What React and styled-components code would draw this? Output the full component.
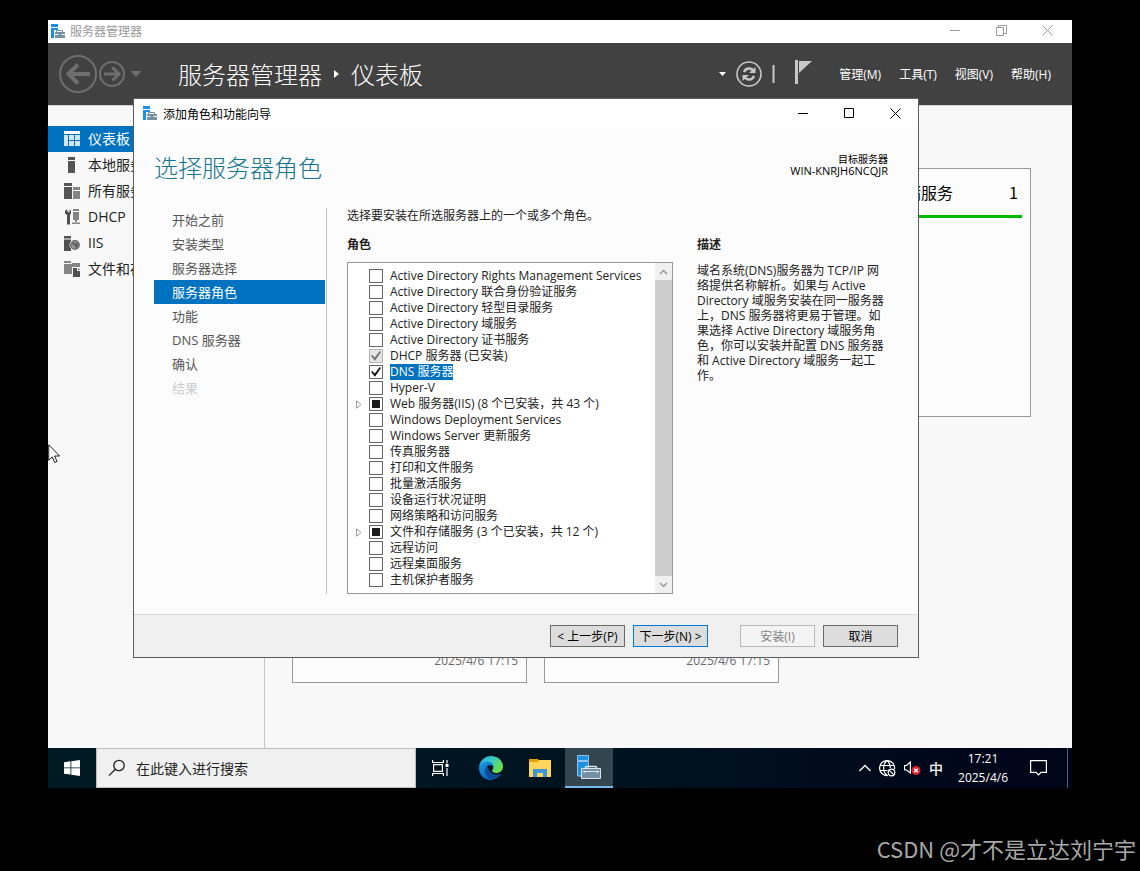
import React from "react";
import styled, { createGlobalStyle, css } from "styled-components";

const ui = `"Open Sans", "Noto Sans CJK SC", sans-serif`;
const cjk = `"Noto Sans CJK SC", sans-serif`;

const sideItems = [
  { name: "仪表板", icon: "dashboard", active: true },
  { name: "本地服务器", icon: "server" },
  { name: "所有服务器", icon: "servers" },
  { name: "DHCP", icon: "dhcp" },
  { name: "IIS", icon: "iis" },
  { name: "文件和存储服务", icon: "files" },
];

const tiles = [
  { id: "dhcp" },
  { id: "iis" },
  { id: "storage", name: "文件和存储服务", count: 1 },
  { id: "local", time: "2025/4/6 17:15" },
  { id: "all", time: "2025/4/6 17:15" },
];

const steps = [
  { name: "开始之前" },
  { name: "安装类型" },
  { name: "服务器选择" },
  { name: "服务器角色", current: true },
  { name: "功能" },
  { name: "DNS 服务器" },
  { name: "确认" },
  { name: "结果", disabled: true },
];

const roles = [
  { name: "Active Directory Rights Management Services" },
  { name: "Active Directory 联合身份验证服务" },
  { name: "Active Directory 轻型目录服务" },
  { name: "Active Directory 域服务" },
  { name: "Active Directory 证书服务" },
  { name: "DHCP 服务器 (已安装)", checked: true, disabled: true },
  { name: "DNS 服务器", checked: true, selected: true },
  { name: "Hyper-V" },
  { name: "Web 服务器(IIS) (8 个已安装，共 43 个)", partial: true },
  { name: "Windows Deployment Services" },
  { name: "Windows Server 更新服务" },
  { name: "传真服务器" },
  { name: "打印和文件服务" },
  { name: "批量激活服务" },
  { name: "设备运行状况证明" },
  { name: "网络策略和访问服务" },
  { name: "文件和存储服务 (3 个已安装，共 12 个)", partial: true },
  { name: "远程访问" },
  { name: "远程桌面服务" },
  { name: "主机保护者服务" },
];

const description = `域名系统(DNS)服务器为 TCP/IP 网
络提供名称解析。如果与 Active
Directory 域服务安装在同一服务器
上，DNS 服务器将更易于管理。如
果选择 Active Directory 域服务角
色，你可以安装并配置 DNS 服务器
和 Active Directory 域服务一起工
作。`;

const ManagerIcon = () => (
  <svg width="14" height="14" viewBox="0 0 14 14" aria-hidden="true">
    <path d="M0 0h7v3H0zM0 4h7v2H3v8H0z" fill="#1e8fe0" />
    <path d="M5.500 8V6.500h6V8" fill="none" stroke="#7490a4" />
    <path d="M4 8h10v6H4z" fill="#7490a4" />
    <path d="M4 10.500h3.500M10.500 10.500H14" stroke="#fff" />
  </svg>
);

const WindowButtons = ({ restore }) => (
  <Controls>
    <button aria-label="最小化">
      <svg width="11" height="11" viewBox="0 0 11 11">
        <path d="M0 5.5h10" />
      </svg>
    </button>
    <button aria-label={restore ? "还原" : "最大化"}>
      <svg width="11" height="11" viewBox="0 0 11 11">
        {restore ? (
          <path d="M.5 2.5h7v8h-7zM2.5 2.5v-2h8v8h-3" />
        ) : (
          <path d="M.5.5h9v9h-9z" />
        )}
      </svg>
    </button>
    <button aria-label="关闭">
      <svg width="11" height="11" viewBox="0 0 11 11">
        <path d="M.5.5l10 10M10.5.5l-10 10" />
      </svg>
    </button>
  </Controls>
);

const SideIcon = ({ name }) => (
  <svg width="16" height="16" viewBox="0 0 16 16" aria-hidden="true">
    {name === "dashboard" && (
      <>
        <path d="M0 0h16v3H0z" fill="#fff" />
        <path
          d="M0 4h4v11H0zM5 4h5v5H5zM11 4h5v5h-5zM5 10h5v5H5zM11 10h5v5h-5z"
          fill="#cfe6f7"
        />
      </>
    )}
    {name === "server" && (
      <path d="M4 0h7v3H4zM4 4h7v12H4z" fill="#555" />
    )}
    {name === "servers" && (
      <>
        <path d="M0 0h8v3H0zM0 4h8v12H0z" fill="#555" />
        <path d="M9 4h7v3H9zM9 8h7v8H9z" fill="#858585" />
      </>
    )}
    {name === "dhcp" && (
      <>
        <path
          d="M1 1.5v3L3 6v9.5h3V6l1-1.500V1.500L5.500.5V3h-2V.5z"
          fill="#505050"
        />
        <path d="M9 0h6v2H9zM9 3h6v8H9zM11 11h2v2h-2zM8 13.500h8V15H8z" fill="#858585" />
      </>
    )}
    {name === "iis" && (
      <>
        <path d="M0 1h7v2.500H0zM0 4.500h7V16H0z" fill="#505050" />
        <circle cx="11" cy="10" r="5.500" fill="#f7f7f7" />
        <circle cx="11" cy="10" r="4.300" fill="#999" stroke="#666" strokeWidth="1.200" />
        <path d="M8 8l2-1 1 2-1 2zM12 7l2 2-1 4-2-1z" fill="#555" />
      </>
    )}
    {name === "files" && (
      <>
        <path d="M0 0h7v2H0zM0 3h8v10H0zM8 2h8v5H8z" fill="#858585" />
        <path d="M8 6h8v10H8z" fill="#f7f7f7" />
        <path d="M9 7h4v3h3v6H9zM14 7l2 2h-2z" fill="#505050" />
      </>
    )}
  </svg>
);

const RoleRow = ({ role, id }) => {
  const box = React.useRef(null);
  React.useEffect(() => {
    box.current.indeterminate = !!role.partial;
  }, [role.partial]);
  return (
    <Row>
      {role.partial ? (
        <Expander aria-label="展开">
          <svg width="6" height="9" viewBox="0 0 6 9">
            <path d="M.5.8v7.400l4.500-3.700z" fill="#fff" stroke="#999" />
          </svg>
        </Expander>
      ) : (
        <span />
      )}
      <Check
        ref={box}
        id={id}
        type="checkbox"
        defaultChecked={role.checked}
        disabled={role.disabled}
      />
      <RoleName htmlFor={id} $selected={role.selected}>
        {role.name}
      </RoleName>
    </Row>
  );
};

const Wizard = () => (
  <Dialog role="dialog" aria-label="添加角色和功能向导">
    <DialogTitle>
      <ManagerIcon />
      <span>添加角色和功能向导</span>
      <WindowButtons />
    </DialogTitle>
    <DialogHead>
      <h1>选择服务器角色</h1>
      <Target>
        <div>目标服务器</div>
        <strong>WIN-KNRJH6NCQJR</strong>
      </Target>
    </DialogHead>
    <DialogBody>
      <Steps>
        {steps.map((s) => (
          <Step key={s.name} $current={s.current} disabled={s.disabled}>
            {s.name}
          </Step>
        ))}
      </Steps>
      <RolePane>
        <p>选择要安装在所选服务器上的一个或多个角色。</p>
        <Columns>
          <RoleColumn>
            <h2>角色</h2>
            <ListBox>
              <Rows>
                {roles.map((r, i) => (
                  <RoleRow key={r.name} role={r} id={`role-${i}`} />
                ))}
              </Rows>
              <ScrollBar>
                <button aria-label="向上">
                  <svg width="9" height="6" viewBox="0 0 9 6">
                    <path d="M1 5l3.500-3.500L8 5" />
                  </svg>
                </button>
                <div />
                <button aria-label="向下">
                  <svg width="9" height="6" viewBox="0 0 9 6">
                    <path d="M1 1l3.500 3.500L8 1" />
                  </svg>
                </button>
              </ScrollBar>
            </ListBox>
          </RoleColumn>
          <About>
            <h2>描述</h2>
            <div>{description}</div>
          </About>
        </Columns>
      </RolePane>
    </DialogBody>
    <DialogFoot>
      <PushButton>&lt; 上一步(P)</PushButton>
      <PushButton $primary>下一步(N) &gt;</PushButton>
      <Spacer />
      <PushButton disabled>安装(I)</PushButton>
      <PushButton>取消</PushButton>
    </DialogFoot>
  </Dialog>
);

const Taskbar = () => (
  <Bar>
    <TaskButton aria-label="开始">
      <svg width="16" height="16" viewBox="0 0 16 16" fill="#fff">
        <path d="M0 2.200L6.500 1.300v6.200H0zM7.300 1.200L16 0v7.500H7.300zM0 8.300h6.500v6.300L0 13.700zM7.300 8.300H16V16l-8.700-1.200z" />
      </svg>
    </TaskButton>
    <Search>
      <svg width="18" height="18" viewBox="0 0 18 18" fill="none" stroke="#222" strokeWidth="1.300">
        <circle cx="11" cy="6.500" r="5.200" />
        <path d="M7.300 10.300L1 16.600" />
      </svg>
      <input type="text" aria-label="搜索" placeholder="在此键入进行搜索" />
    </Search>
    <TaskButton aria-label="任务视图" $wide>
      <svg width="17" height="16" viewBox="0 0 17 16" fill="none" stroke="#fff" strokeWidth="1.200">
        <path d="M.6 0v2.500h10.800V0M.6 16v-2.500h10.800V16M1.600 4.600h8.800v6.800H1.600zM15 0v3.500M15 8v8" />
        <path d="M13.500 4h3v3h-3z" fill="#fff" stroke="none" />
      </svg>
    </TaskButton>
    <TaskButton aria-label="Edge">
      <svg width="24" height="24" viewBox="0 0 24 24">
        <defs>
          <linearGradient id="edgeTop" x1="0" y1="0" x2="1" y2="0.500">
            <stop offset="0" stopColor="#2aa7e8" />
            <stop offset="0.500" stopColor="#35c9c9" />
            <stop offset="1" stopColor="#6be04a" />
          </linearGradient>
          <linearGradient id="edgeBody" x1="0" y1="0" x2="0.600" y2="1">
            <stop offset="0" stopColor="#1b9de2" />
            <stop offset="1" stopColor="#0a62bd" />
          </linearGradient>
        </defs>
        <path d="M0 11C1 4.500 6 0 12 0c7 0 12 5 12 10.500 0 4-3 6.500-6.500 6.500-3 0-4.500-1.200-4.500-2.300 0-.8 1.300-1.200 1.300-3.200C14.300 9 12 7 8.500 7 4.500 7 1.500 9 0 11z" fill="url(#edgeTop)" />
        <path d="M0 12c.5-4.500 4-6.500 8.500-6.500 4 0 6.500 3 6 6-.4-1.700-2-2.500-3.500-2.500-3 0-4.500 3-4.500 6 0 4.500 3.500 8 8 8.700-1 .3-1.700.3-2.500.3C5 24 0 18.500 0 12z" fill="url(#edgeBody)" />
        <path d="M9 10c-2 1.500-2.500 3.500-2.500 5.500 0 4.500 4 8.300 8.500 8.100 3.500-1.100 6-3.500 7.400-6.100-1.500.8-3.400 1.200-5.400 1-4.500-.5-8-3.500-8-8.500z" fill="#0c4c94" />
      </svg>
    </TaskButton>
    <TaskButton aria-label="文件资源管理器">
      <svg width="22" height="18" viewBox="0 0 22 18">
        <path d="M0 0h9l1.500 2H0z" fill="#d99a00" />
        <path d="M0 2h9l1-1h12v17H0z" fill="#ffd45c" />
        <path d="M0 0h9v2l-1 1H0z" fill="#e8a200" />
        <path d="M4 10h14v8h-4v-4H8v4H4z" fill="#3b97dc" />
      </svg>
    </TaskButton>
    <TaskButton aria-label="服务器管理器" $active>
      <svg width="24" height="24" viewBox="0 0 24 24">
        <path d="M.5.500h11v5H.5zM.5 6.500h11V21H.5z" fill="#1e8fe0" stroke="#8cc4ee" />
        <path d="M8 13.500l1-2h10l1 2" fill="none" stroke="#dbe5ec" strokeWidth="1.500" />
        <path d="M4.500 13.500h19v10h-19z" fill="#7490a4" stroke="#dbe5ec" />
        <path d="M6 16.500h16M7.500 16v2M20.500 16v2" fill="none" stroke="#dbe5ec" />
      </svg>
    </TaskButton>
    <Tray>
      <button aria-label="显示隐藏的图标">
        <svg width="12" height="8" viewBox="0 0 12 8" fill="none" stroke="#fff" strokeWidth="1.300">
          <path d="M.5 7L6 1.500 11.500 7" />
        </svg>
      </button>
      <button aria-label="网络">
        <svg width="17" height="17" viewBox="0 0 17 17" fill="none" stroke="#fff" strokeWidth="1.200">
          <path d="M9 15.500A7.500 7.500 0 1 1 15.500 9M1.500 5.500h13M1.500 10.500h7M8 15.500c-4.500-4-4.500-11 0-15M8 .5c2.500 2 3.300 4.500 3.300 7.500" />
          <circle cx="12.500" cy="12.500" r="3.300" />
          <path d="M10.300 10.300l4.400 4.400" />
        </svg>
      </button>
      <button aria-label="音量">
        <svg width="17" height="15" viewBox="0 0 17 15">
          <path d="M.6 4.500h2L6.400 1v11L2.600 9H.6z" fill="none" stroke="#fff" strokeWidth="1.200" />
          <circle cx="12" cy="9.500" r="4.500" fill="#e01f2d" />
          <path d="M10.200 7.700l3.600 3.600M13.800 7.700l-3.600 3.600" stroke="#fff" strokeWidth="1.300" />
        </svg>
      </button>
      <button>中</button>
    </Tray>
    <Clock>
      17:21
      <br />
      2025/4/6
    </Clock>
    <Notice aria-label="通知">
      <svg width="17" height="16" viewBox="0 0 17 16" fill="none" stroke="#fff" strokeWidth="1.200">
        <path d="M.6.6h15.800v11.800h-5.400L8.500 15 6 12.400H.6z" />
      </svg>
    </Notice>
  </Bar>
);

const App = () => (
  <Page>
    <GlobalStyle />
    <Screen>
      <TitleBar>
        <ManagerIcon />
        <span>服务器管理器</span>
        <WindowButtons restore />
      </TitleBar>
      <NavBar>
        <History aria-label="后退">
          <svg width="84" height="40" viewBox="0 0 84 40" fill="none" stroke="#6e6e6e">
            <circle cx="20" cy="20" r="18" strokeWidth="2" />
            <path d="M32 20H11M20 10.500L10.500 20l9.500 9.500" strokeWidth="4" />
            <circle cx="54" cy="20" r="12" strokeWidth="2" />
            <path d="M46 20h14M54.500 13.500L61 20l-6.500 6.500" strokeWidth="3" />
            <path d="M72.500 17h11L78 23z" fill="#6e6e6e" stroke="none" />
          </svg>
        </History>
        <Crumbs>
          <span>服务器管理器</span>
          <svg width="5" height="8" viewBox="0 0 5 8" fill="#fff">
            <path d="M0 0l5 4-5 4z" />
          </svg>
          <span>仪表板</span>
        </Crumbs>
        <Tools>
          <svg width="94" height="40" viewBox="0 0 94 40" fill="none" stroke="#c8c8c8">
            <path d="M0 18h7l-3.500 4z" fill="#fff" stroke="none" />
            <circle cx="30" cy="20" r="12" strokeWidth="1.600" />
            <path d="M25 18c1-2.500 3-3.500 5-3.500s3.500.7 4.500 2.500M35 22c-1 2.500-3 3.500-5 3.500s-3.500-.7-4.500-2.500" strokeWidth="2.400" />
            <path d="M36.500 13v6H30zM23.500 27v-6H30z" fill="#c8c8c8" stroke="none" />
            <path d="M54.500 11v18" strokeWidth="2" />
            <path d="M76 6h3v24h-3z" fill="#c8c8c8" stroke="none" />
            <path d="M80 7h13L80 19z" fill="#c8c8c8" stroke="none" />
          </svg>
          <button>管理(M)</button>
          <button>工具(T)</button>
          <button>视图(V)</button>
          <button>帮助(H)</button>
        </Tools>
      </NavBar>
      <Content>
        <Side>
          {sideItems.map((s) => (
            <SideLink key={s.name} href="#" $active={s.active}>
              <SideIcon name={s.icon} />
              <span>{s.name}</span>
            </SideLink>
          ))}
        </Side>
        <Board>
          {tiles.map((t) => (
            <Tile key={t.id}>
              <TileHead>
                <span>{t.name}</span>
                <span>{t.count}</span>
              </TileHead>
              {t.time && <time>{t.time}</time>}
            </Tile>
          ))}
        </Board>
      </Content>
      <Taskbar />
      <Wizard />
      <Cursor width="13" height="20" viewBox="0 0 13 20">
        <path d="M.7.8v15.500l3.600-3.400 2.400 5.600 2.300-1-2.400-5.500h5z" fill="#fff" stroke="#222" />
      </Cursor>
    </Screen>
    <Watermark>CSDN @才不是立达刘宁宇</Watermark>
  </Page>
);

const GlobalStyle = createGlobalStyle`
  * {
    box-sizing: border-box;
  }
  body {
    margin: 0;
    background-color: #000;
    font-family: ${ui};
    font-size: 12px;
  }
  h1, h2, p {
    margin: 0;
  }
  button {
    margin: 0;
    padding: 0;
    border: 0;
    background: none;
    font: inherit;
    color: inherit;
  }
  svg {
    display: block;
    flex: none;
  }
`;

const Page = styled.div`
  min-height: 100vh;
  display: grid;
  grid-template-rows: 1fr 83px;
  padding-top: 20px;
`;

const Screen = styled.div`
  position: relative;
  display: flex;
  flex-direction: column;
  margin: 0 68px 0 48px;
  background-color: #f8f8f8;
`;

const Controls = styled.div`
  margin-left: auto;
  display: flex;
  align-self: stretch;
  button {
    width: 46px;
    display: grid;
    place-items: center;
  }
  svg {
    fill: none;
    stroke: currentColor;
  }
`;

const TitleBar = styled.header`
  height: 23px;
  display: flex;
  align-items: center;
  gap: 5px;
  padding: 0 2px 2px 3px;
  background-color: #fff;
  color: #999;
  font-family: ${cjk};
`;

const NavBar = styled.div`
  height: 62px;
  display: flex;
  align-items: center;
  padding: 0 21px 0 10px;
  background-color: #414141;
  color: #fff;
`;

const History = styled.button`
  margin-right: 36px;
`;

const Crumbs = styled.div`
  display: flex;
  align-items: center;
  gap: 12px;
  font-family: ${cjk};
  font-size: 24px;
  font-weight: 300;
  line-height: 32px;
`;

const Tools = styled.div`
  margin-left: auto;
  display: flex;
  align-items: center;
  gap: 18px;
  svg {
    margin-right: 8px;
  }
`;

const Content = styled.div`
  flex: 1;
  display: flex;
  border-top: 1px solid #d0d0d0;
`;

const Side = styled.nav`
  width: 217px;
  padding-top: 20px;
  border-right: 1px solid #c4c4c4;
`;

const SideLink = styled.a`
  height: 26px;
  display: flex;
  align-items: center;
  gap: 8px;
  padding-left: 16px;
  font-size: 14px;
  color: ${(p) => (p.$active ? "#fff" : "#222")};
  background-color: ${(p) => (p.$active ? "#0072c0" : "transparent")};
  text-decoration: none;
  white-space: nowrap;
  span {
    padding-bottom: 2px;
  }
`;

const Board = styled.main`
  flex: 1;
  display: grid;
  grid-template-columns: repeat(3, 1fr);
  grid-auto-rows: 249px;
  gap: 17px;
  padding: 62px 41px 64px 27px;
`;

const Tile = styled.section`
  display: flex;
  flex-direction: column;
  justify-content: space-between;
  padding: 0 8px 12px;
  border: 1px solid #999;
  background-color: #fcfcfc;
  time {
    text-align: right;
    line-height: 18px;
    color: #6a6a6a;
  }
`;

const TileHead = styled.div`
  height: 49px;
  display: flex;
  justify-content: space-between;
  align-items: center;
  padding: 0 4px 0 36px;
  border-bottom: 3px solid #00b900;
  font-family: ${cjk};
  font-size: 16px;
  color: #000;
`;

const Dialog = styled.div`
  position: absolute;
  top: 78px;
  left: 85px;
  right: 153px;
  bottom: 130px;
  display: flex;
  flex-direction: column;
  border: 1px solid #5c5c5c;
  background-color: #fcfcfc;
  color: #222;
`;

const DialogTitle = styled.div`
  height: 30px;
  display: flex;
  align-items: center;
  gap: 6px;
  padding: 0 0 2px 9px;
  background-color: #fff;
  color: #000;
  font-family: ${cjk};
`;

const DialogHead = styled.div`
  height: 79px;
  display: flex;
  justify-content: space-between;
  padding: 22px 30px 0 20px;
  h1 {
    font-family: ${cjk};
    font-size: 24px;
    font-weight: 300;
    line-height: 32px;
    color: #12758f;
  }
`;

const Target = styled.div`
  padding-top: 2px;
  text-align: right;
  font-size: 10px;
  line-height: 12px;
  color: #000;
  strong {
    display: block;
    font-size: 11px;
    font-weight: 400;
  }
`;

const DialogBody = styled.div`
  flex: 1;
  display: flex;
  padding: 0 30px 20px 20px;
`;

const Steps = styled.div`
  width: 173px;
  display: flex;
  flex-direction: column;
  padding-right: 1px;
  border-right: 1px solid #bdbdbd;
`;

const Step = styled.button`
  height: 24px;
  padding: 0 0 2px 18px;
  text-align: left;
  font-size: 13px;
  color: ${(p) => (p.$current ? "#fff" : p.disabled ? "#ccc" : "#555")};
  background-color: ${(p) => (p.$current ? "#0072c0" : "transparent")};
`;

const RolePane = styled.div`
  flex: 1;
  display: flex;
  flex-direction: column;
  padding-left: 20px;
  p {
    line-height: 16px;
    margin-bottom: 12px;
  }
  h2 {
    font-size: 12px;
    font-weight: 700;
    line-height: 18px;
  }
`;

const Columns = styled.div`
  flex: 1;
  display: flex;
  gap: 24px;
`;

const RoleColumn = styled.div`
  flex: 1;
  display: flex;
  flex-direction: column;
  gap: 8px;
`;

const About = styled.div`
  width: 191px;
  h2 {
    margin-bottom: 9px;
  }
  div {
    line-height: 15px;
    white-space: pre;
  }
`;

const ListBox = styled.div`
  flex: 1;
  display: flex;
  border: 1px solid #999;
  background-color: #fff;
`;

const Rows = styled.div`
  flex: 1;
  padding: 5px 0 5px 8px;
`;

const Row = styled.div`
  height: 16px;
  display: grid;
  grid-template-columns: 6px 14px 1fr;
  gap: 7px;
  align-items: center;
  white-space: nowrap;
`;

const Expander = styled.button`
  display: flex;
`;

const Check = styled.input`
  appearance: none;
  width: 14px;
  height: 14px;
  margin: 0;
  display: grid;
  place-items: center;
  border: 1px solid #666;
  background-color: #fff;
  &:checked::after {
    content: "";
    width: 10px;
    height: 10px;
    background-color: #111;
    clip-path: polygon(0 50%, 12% 40%, 38% 66%, 88% 0, 100% 10%, 40% 98%);
  }
  &:indeterminate::after {
    content: "";
    width: 8px;
    height: 8px;
    background-color: #1c1c1c;
  }
  &:disabled {
    border-color: #b5b5b5;
    background-color: #e4e4e4;
  }
  &:disabled::after {
    background-color: #707070;
  }
`;

const RoleName = styled.label`
  justify-self: start;
  line-height: 16px;
  ${(p) =>
    p.$selected &&
    css`
      color: #fff;
      background-color: #0072c0;
    `}
`;

const ScrollBar = styled.div`
  width: 17px;
  display: flex;
  flex-direction: column;
  background-color: #f0f0f0;
  div {
    flex: 1;
    background-color: #cdcdcd;
  }
  button {
    height: 17px;
    display: grid;
    place-items: center;
  }
  svg {
    fill: none;
    stroke: #999;
    stroke-width: 1.5;
  }
`;

const DialogFoot = styled.div`
  height: 43px;
  display: flex;
  align-items: center;
  justify-content: flex-end;
  gap: 8px;
  padding-right: 20px;
  border-top: 1px solid #dcdcdc;
  background-color: #f0f0f0;
`;

const Spacer = styled.div`
  width: 16px;
`;

const PushButton = styled.button`
  width: 75px;
  height: 22px;
  border: 1px solid ${(p) => (p.$primary ? "#0078d7" : "#6a6a6a")};
  background-color: #ddd;
  color: #000;
  white-space: nowrap;
  &:disabled {
    border-color: #b5b9bb;
    background-color: #f4f4f4;
    color: #838383;
  }
`;

const Bar = styled.footer`
  height: 40px;
  display: flex;
  background: linear-gradient(90deg, #001a24, #001420 50%, #000418);
  color: #fff;
`;

const TaskButton = styled.button`
  width: 48px;
  display: grid;
  place-items: center;
  margin-right: ${(p) => (p.$wide ? "3px" : "0")};
  & + & {
    margin-right: 1px;
  }
  ${(p) =>
    p.$active &&
    css`
      background-color: #33454f;
      border-bottom: 2px solid #76b9ed;
    `}
`;

const Search = styled.div`
  width: 320px;
  display: flex;
  align-items: center;
  gap: 10px;
  padding-left: 11px;
  border: 1px solid #bbb;
  background-color: #f0f0f0;
  input {
    flex: 1;
    border: 0;
    outline: 0;
    background: none;
    padding: 0;
    font-family: ${cjk};
    font-size: 14px;
  }
  input::placeholder {
    color: #222;
  }
`;

const Tray = styled.div`
  margin-left: auto;
  display: flex;
  align-items: center;
  gap: 8px;
  margin-right: 15px;
  font-family: ${cjk};
  font-size: 14px;
  font-weight: 500;
`;

const Clock = styled.div`
  align-self: center;
  text-align: center;
  line-height: 19px;
`;

const Notice = styled.button`
  width: 58px;
  margin: 0 4px 0 2px;
  display: grid;
  place-items: center;
  border-right: 1px solid #566070;
`;

const Cursor = styled.svg`
  position: absolute;
  left: 0;
  top: 424px;
`;

const Watermark = styled.div`
  padding: 44px 4px 0 0;
  text-align: right;
  font-family: ${cjk};
  font-size: 22px;
  line-height: 32px;
  color: #a8a8a8;
`;

export default App;
